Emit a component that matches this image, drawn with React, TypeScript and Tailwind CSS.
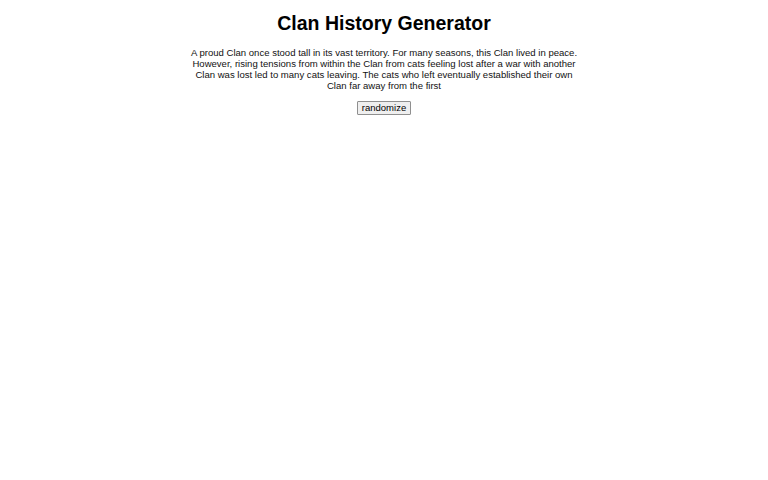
import { useState } from 'react';

const history =
  'A proud Clan once stood tall in its vast territory. For many seasons, this Clan lived in peace. However, rising tensions from within the Clan from cats feeling lost after a war with another Clan was lost led to many cats leaving. The cats who left eventually established their own Clan far away from the first';

export default function App() {
  const [text, setText] = useState(history);

  return (
    <div className="min-h-screen bg-white text-black font-['Liberation_Sans',Arial,sans-serif] text-center">
      <h1 className="pt-[12px] text-[19.5px] leading-[22px] font-bold">Clan History Generator</h1>
      <p className="mx-auto mt-[13px] w-[388px] text-[9.55px] leading-[11px] text-[#111]">{text}</p>
      <button
        onClick={() => setText(history)}
        className="mt-[10px] px-[4px] h-[14px] text-[9.5px] leading-[12px] bg-[#efefef] border border-[#8f8f8f] rounded-[1px]"
      >
        randomize
      </button>
    </div>
  );
}
